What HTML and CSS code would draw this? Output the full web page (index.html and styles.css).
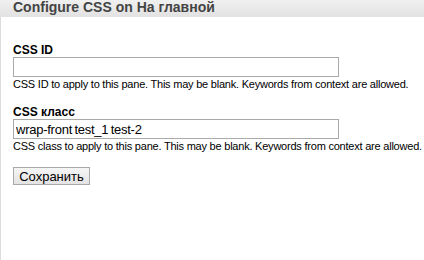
FILE: index.html
```html
<!DOCTYPE html>
<html>
    <head>
        <meta charset="utf-8" />
        <title>Configure CSS</title>
        <link rel="stylesheet" href="styles.css">
    </head>
    <body>
        <div class="pane-head">
            <h2 class="pane-head__title">Configure CSS on На главной</h2>
        </div>
        <form class="pane-form">
            <div class="form-item">
                <label class="form-item__label" for="css-id">CSS ID</label>
                <input class="form-item__input" type="text" id="css-id" value="">
                <div class="form-item__desc">CSS ID to apply to this pane. This may be blank. Keywords from context are allowed.</div>
            </div>
            <div class="form-item">
                <label class="form-item__label" for="css-class">CSS класс</label>
                <input class="form-item__input" type="text" id="css-class" value="wrap-front test_1 test-2">
                <div class="form-item__desc">CSS class to apply to this pane. This may be blank. Keywords from context are allowed.</div>
            </div>
            <button class="form-submit" type="button">Сохранить</button>
        </form>
    </body>
</html>
```

FILE: styles.css
```css
*,*::before,*::after{
    box-sizing: border-box;
}
body{
    margin:0;
    padding:0;
    background:#fff;
    font-family:"Liberation Sans", Arial, sans-serif;
    color:#000;
}
.pane-head{
    height:17px;
    background:linear-gradient(#f0f0f0, #e2e2e2);
    padding:0 13px;
}
.pane-head__title{
    margin:0;
    font-size:14px;
    line-height:14px;
    font-weight:bold;
    color:#444;
}
.pane-form{
    border-left:1px solid #dcdcdc;
    padding:26px 12px 0;
    height:243px;
}
.form-item{
    margin-bottom:14px;
}
.form-item__label{
    display:block;
    font-size:12px;
    line-height:14px;
    font-weight:bold;
}
.form-item__input{
    display:block;
    width:326px;
    height:20px;
    margin:0;
    padding:0 2px;
    border:1px solid #aaa;
    font-family:inherit;
    font-size:13px;
    letter-spacing:-0.25px;
    word-spacing:-1px;
    color:#000;
    outline:none;
}
.form-item__desc{
    font-size:11px;
    line-height:13px;
    letter-spacing:-0.22px;
    margin-top:1px;
    white-space:nowrap;
}
.form-submit{
    display:block;
    width:77px;
    height:18px;
    margin-top:0;
    padding:0;
    border:1px solid #aaa;
    background:linear-gradient(#f6f6f6, #e3e3e3);
    font-family:inherit;
    font-size:13px;
    color:#000;
}
```
